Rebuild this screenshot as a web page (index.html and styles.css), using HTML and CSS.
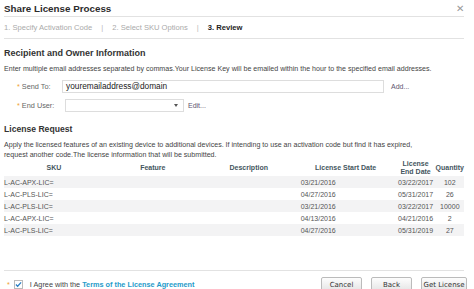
FILE: index.html
```html
<!DOCTYPE html>
<html lang="en">
<head>
    <meta charset="UTF-8">
    <title>Share License Process</title>
    <link rel="stylesheet" href="styles.css">
</head>
<body>
    <div id="dialog">
        <div class="title-bar">
            <span class="title">Share License Process</span>
            <span class="close">&#x2715;</span>
        </div>
        <div class="steps">
            <span>1. Specify Activation Code</span>
            <span class="sep">|</span>
            <span>2. Select SKU Options</span>
            <span class="sep">|</span>
            <span class="current">3. Review</span>
        </div>

        <div class="section">
            <h2>Recipient and Owner Information</h2>
            <p class="note">Enter multiple email addresses separated by commas.Your License Key will be emailed within the hour to the specified email addresses.</p>
            <div class="field">
                <label><span class="req">*</span> Send To:</label>
                <div class="input">youremailaddress@domain</div>
                <a class="small-link">Add...</a>
            </div>
            <div class="field">
                <label><span class="req">*</span> End User:</label>
                <div class="select"><span class="caret"></span></div>
                <a class="small-link">Edit...</a>
            </div>
        </div>

        <div class="section license">
            <h2>License Request</h2>
            <p class="note narrow">Apply the licensed features of an existing device to additional devices. If intending to use an activation code but find it has expired, request another code.The license information that will be submitted.</p>
            <table class="grid">
                <thead>
                    <tr>
                        <th class="c-sku">SKU</th>
                        <th class="c-feat">Feature</th>
                        <th class="c-desc">Description</th>
                        <th class="c-start">License Start Date</th>
                        <th class="c-end">License<br>End Date</th>
                        <th class="c-qty">Quantity</th>
                    </tr>
                </thead>
                <tbody id="rows"></tbody>
            </table>
        </div>

        <div class="footer">
            <div class="agree">
                <span class="req">*</span>
                <span class="check">
                    <svg width="8" height="7" viewBox="0 0 8 7"><path d="M1 3.5 L3 5.5 L7 1" fill="none" stroke="#2a7fc4" stroke-width="1.4"/></svg>
                </span>
                <span>I Agree with the <a class="terms">Terms of the License Agreement</a></span>
            </div>
            <div class="buttons">
                <button>Cancel</button>
                <button>Back</button>
                <button>Get License</button>
            </div>
        </div>
    </div>

    <script>
        const licenses = [
            ['L-AC-APX-LIC=', '03/21/2016', '03/22/2017', '102'],
            ['L-AC-PLS-LIC=', '04/27/2016', '05/31/2017', '26'],
            ['L-AC-PLS-LIC=', '03/21/2016', '03/22/2017', '10000'],
            ['L-AC-APX-LIC=', '04/13/2016', '04/21/2016', '2'],
            ['L-AC-PLS-LIC=', '04/27/2016', '05/31/2019', '27']
        ];

        const tbody = document.getElementById('rows');
        licenses.forEach(([sku, start, end, qty]) => {
            const tr = document.createElement('tr');
            tr.innerHTML = `<td class="d-sku">${sku}</td><td></td><td></td><td class="d-start">${start}</td><td class="d-end">${end}</td><td class="d-qty">${qty}</td>`;
            tbody.appendChild(tr);
        });
    </script>
</body>
</html>
```
FILE: styles.css
```css
body {
    margin: 0;
    background-color: #fff;
    font-family: "Liberation Sans", Arial, sans-serif;
    color: #333;
    overflow: hidden;
}
#dialog {
    width: 474px;
    height: 289px;
    padding: 0 10px 0 4px;
    box-sizing: border-box;
    display: flex;
    flex-direction: column;
}
.title-bar {
    height: 16px;
    flex: none;
    display: flex;
    justify-content: space-between;
    align-items: center;
    border-bottom: 1px solid #e2e2e2;
}
.title {
    font-size: 9.8px;
    font-weight: bold;
    color: #2b2b2b;
}
.close {
    font-size: 10px;
    color: #999;
}
.steps {
    height: 21px;
    flex: none;
    display: flex;
    align-items: center;
    gap: 9px;
    font-size: 7.6px;
    color: #aaa;
    border-bottom: 1px solid #e2e2e2;
}
.steps .sep {
    color: #bbb;
}
.steps .current {
    color: #222;
    font-weight: bold;
}
.section {
    padding-top: 9px;
}
.section.license {
    padding-top: 12px;
}
h2 {
    margin: 0;
    font-size: 9px;
    font-weight: bold;
    color: #333;
}
.license h2 {
    font-size: 8.6px;
}
.note {
    margin: 6px 0 0;
    font-size: 7.1px;
    line-height: 10px;
    color: #444;
}
.note.narrow {
    max-width: 420px;
}
.field {
    display: flex;
    align-items: center;
    margin-top: 6px;
    font-size: 7.3px;
}
.field + .field {
    margin-top: 6px;
}
.field label {
    width: 58px;
    padding-left: 13px;
    box-sizing: border-box;
    color: #666;
}
.req {
    color: #f0a030;
}
.input {
    width: 322px;
    height: 13px;
    border: 1px solid #ddd;
    box-sizing: border-box;
    padding: 0 3px;
    font-size: 8.3px;
    line-height: 11px;
    color: #1a1a1a;
}
.select {
    width: 119px;
    height: 13px;
    border: 1px solid #ddd;
    box-sizing: border-box;
    margin-left: 3px;
    position: relative;
}
.caret {
    position: absolute;
    right: 5px;
    top: 4px;
    border-left: 2px solid transparent;
    border-right: 2px solid transparent;
    border-top: 3px solid #555;
}
.small-link {
    margin-left: 7px;
    color: #5e5670;
    font-size: 7px;
}
.select + .small-link {
    margin-left: 4px;
}
.grid {
    width: 100%;
    margin-top: 0;
    border-collapse: collapse;
    font-size: 7px;
}
.grid th {
    height: 16px;
    padding: 0;
    font-weight: bold;
    color: #44565e;
    line-height: 8px;
}
.grid td {
    height: 12px;
    padding: 0;
    color: #555;
}
.grid tbody tr:nth-child(odd) {
    background-color: #f3f3f4;
}
.c-sku { width: 100px; }
.c-feat { width: 98px; }
.c-desc { width: 94px; }
.c-start { width: 100px; }
.c-end { width: 40px; }
.grid td.d-start { padding-left: 5px; }
.grid td.d-end { text-align: center; }
.grid td.d-qty { text-align: center; }
.footer {
    margin-top: auto;
    height: 19px;
    box-sizing: border-box;
    flex: none;
    border-top: 1px solid #e2e2e2;
    display: flex;
    justify-content: space-between;
    align-items: flex-start;
    padding-top: 6px;
}
.agree {
    display: flex;
    align-items: center;
    gap: 4px;
    font-size: 7.3px;
    color: #444;
    padding: 3px 0 0 3px;
}
.check {
    width: 7px;
    height: 7px;
    border: 1px solid #bbb;
    display: flex;
    align-items: center;
    justify-content: center;
    margin-right: 3px;
}
.terms {
    color: #1e9bc9;
    font-weight: bold;
}
.buttons {
    display: flex;
    gap: 9px;
    margin-right: -3px;
}
button {
    height: 15px;
    padding: 0;
    width: 41px;
    font-family: "DejaVu Sans", sans-serif;
    font-size: 7px;
    color: #333;
    border: 1px solid #bbb;
    border-radius: 2px;
    background: linear-gradient(#fdfdfd, #e4e4e4);
}
button:last-child {
    width: 46px;
}
```
